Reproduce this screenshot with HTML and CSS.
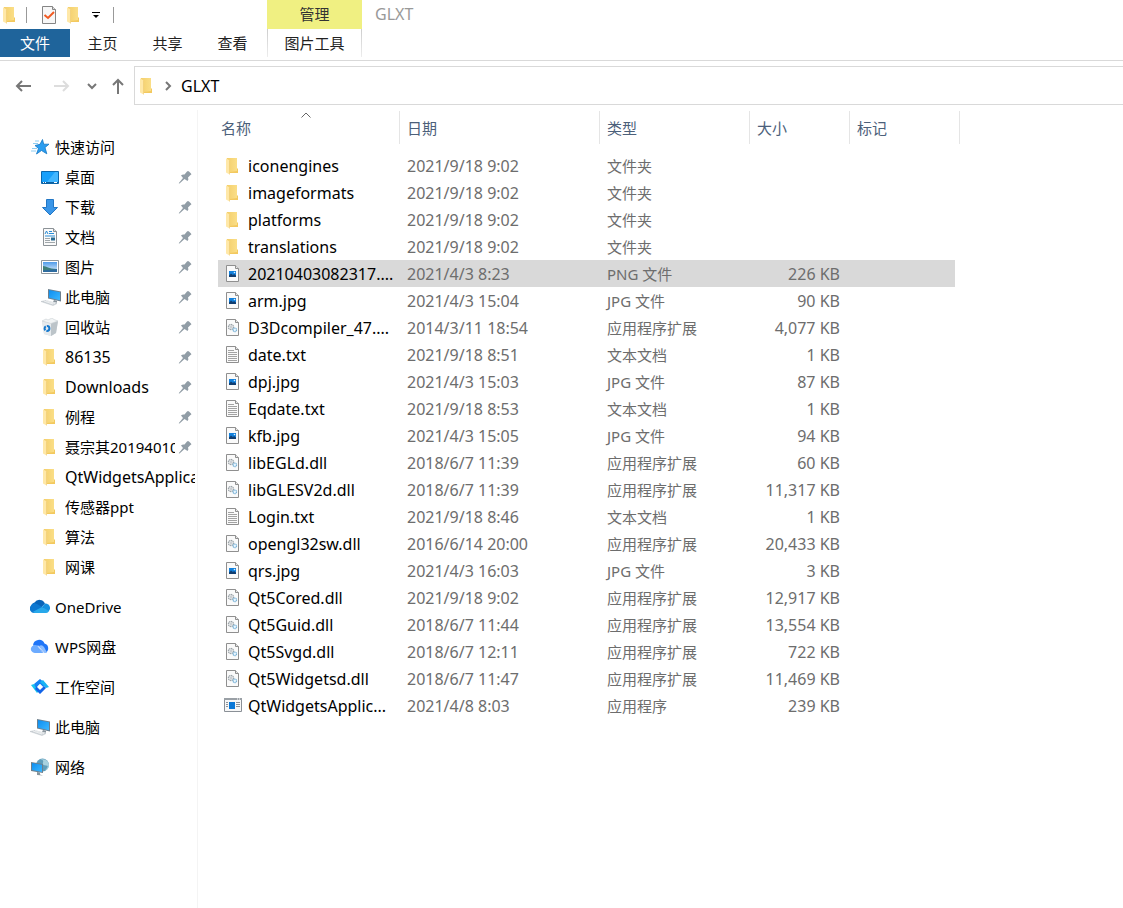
FILE: index.html
```html
<!DOCTYPE html>
<html lang="zh-CN">
  <head>
    <meta charset="UTF-8" />
    <meta name="viewport" content="width=device-width, initial-scale=1.0" />
    <title>GLXT</title>
    <link rel="stylesheet" href="styles.css">
  </head>
  <body>
    <!-- icons -->
    <svg class="sprite" aria-hidden="true">
      <defs>
        <linearGradient id="gold" x1="0" x2="1" y1="0" y2="0">
          <stop offset="0" stop-color="#f4cf6c" />
          <stop offset="1" stop-color="#fbe08a" />
        </linearGradient>
        <linearGradient id="screen" x1="0" x2="1" y1="0" y2="1">
          <stop offset="0" stop-color="#0d8ef0" />
          <stop offset="1" stop-color="#3db8ff" />
        </linearGradient>
        <linearGradient id="sky" x1="0" x2="0" y1="0" y2="1">
          <stop offset="0" stop-color="#4f9be8" />
          <stop offset="1" stop-color="#e8f4ff" />
        </linearGradient>
      </defs>
      <symbol id="i-folder" viewBox="0 0 18 18">
        <path d="M3 1h10v11h1v4H5L3 3z" fill="url(#gold)" />
        <path d="M13 11.5h1V16H6v-1l7-1z" fill="#f3c95f" />
        <path d="M2 1.300 5.600 3.600V17.600L2 15.500z" fill="#ffe8a8" />
        <path d="M5.200 3.400h.6v14h-.6z" fill="#eec970" />
      </symbol>
      <symbol id="i-image" viewBox="0 0 18 18">
        <path d="M2.500.5h9l3 3v13h-12z" fill="#fafafa" stroke="#8f8f8f" />
        <path d="M11.500.5v3h3" fill="#e8e8e8" stroke="#8f8f8f" />
        <path d="M5 6h7v6H5z" fill="#1280dc" />
        <path d="M5 10.500 7 8.500l2 1.500 1-1 2 1.500V12H5z" fill="#123e70" />
        <circle cx="10.500" cy="7.500" r=".8" fill="#d8efff" />
      </symbol>
      <symbol id="i-dll" viewBox="0 0 18 18">
        <path d="M2.500.5h9l3 3v13h-12z" fill="#fafafa" stroke="#8f8f8f" />
        <path d="M11.500.5v3h3" fill="#e8e8e8" stroke="#8f8f8f" />
        <circle cx="7" cy="8" r="2.500" fill="#f2f3f4" stroke="#9ba3a8" stroke-width="1.400" stroke-dasharray="1.400 .5" />
        <circle cx="7" cy="8" r=".8" fill="#9ba3a8" />
        <circle cx="10.800" cy="10.800" r="1.800" fill="#eaf6ff" stroke="#7cb4d8" stroke-width="1.200" stroke-dasharray="1.300 .4" />
      </symbol>
      <symbol id="i-text" viewBox="0 0 18 18">
        <path d="M2.500.5h9l3 3v13h-12z" fill="#fafafa" stroke="#8f8f8f" />
        <path d="M11.500.5v3h3" fill="#e8e8e8" stroke="#8f8f8f" />
        <path d="M4 4.500h6M4 6.500h9M4 8.500h9M4 10.500h9M4 12.500h9M4 14.500h9" stroke="#a3a3a3" />
      </symbol>
      <symbol id="i-exe" viewBox="0 0 18 18">
        <path d="M.5 1.500h17v13H.5z" fill="#f7f7f7" stroke="#8a9097" />
        <path d="M0 1h18v2H0z" fill="#9aa0a6" />
        <path d="M13 2h1m1 0h1" stroke="#fff" />
        <path d="M5 5h6v7H5z" fill="#0a78d7" />
        <path d="M2 5.500h2M2 7.500h2M2 9.500h2M12 5.500h4M12 7.500h4M12 9.500h4" stroke="#8e9399" />
      </symbol>
      <symbol id="i-task" viewBox="0 0 18 18">
        <path d="M2.500.5h10l3 3v14h-13z" fill="#f7f7f7" stroke="#858585" />
        <path d="M12.500.5v3h3" fill="#ddd" stroke="#858585" />
        <path d="m4.500 9 3.500 3 6-6" fill="none" stroke="#f15a22" stroke-width="2" />
      </symbol>
      <symbol id="i-star" viewBox="0 0 20 20">
        <path d="m12.500 2.500 1.200 4.700H19l-4 3.300 1.800 6.300-5.300-3.300-5 3.500 2-5.500L5 8.500l5-1.200z" fill="#2a9df0" stroke="#1477c4" stroke-width=".8" />
        <path d="M5 4h4M3 6.500h5M2 11.500h5M1 14h5" stroke="#8fcdf2" />
      </symbol>
      <symbol id="i-desktop" viewBox="0 0 18 18">
        <path d="M.5 3.500h17v12H.5z" fill="#18a0fb" stroke="#0b68ae" />
        <path d="m6 14 8-10h3v10z" fill="#42b6ff" />
        <path d="M1 14h16v1.500H1z" fill="#0b5f9f" />
        <path d="M2 14.500h1m1 0h1m8 0h3" stroke="#fff" />
      </symbol>
      <symbol id="i-down" viewBox="0 0 18 18">
        <path d="M5.500 1.500h7v8h4L9 17 1.500 9.500h4z" fill="#3a96e8" stroke="#2277c5" />
      </symbol>
      <symbol id="i-doc" viewBox="0 0 18 18">
        <path d="M2.500.5h10l3 3v14h-13z" fill="#fafafa" stroke="#8c9297" />
        <path d="M12.500.5v3h3" fill="#e0e0e0" stroke="#8c9297" />
        <path d="m4 6 1.500-3L7 6M8 3.500h3M8 5.500h5M4 8h10" fill="none" stroke="#2a8dd6" />
        <path d="M4 10.500h5M4 12.500h5M4 14.500h10" stroke="#a0a7ab" />
        <path d="M10 9.500h4v3h-4z" fill="#296a91" />
      </symbol>
      <symbol id="i-picture" viewBox="0 0 18 18">
        <path d="M.5 2.500h17v13H.5z" fill="#fff" stroke="#8f979d" />
        <path d="M2 4h14v10H2z" fill="url(#sky)" />
        <path d="M2 8c4 0 5 3 14 3v3H2z" fill="#3f7f78" />
        <path d="M2 12.500 16 11v3H2z" fill="#2d6ba0" />
      </symbol>
      <symbol id="i-pc" viewBox="0 0 20 20">
        <path d="m7 2 13 2.500v10L7 11.500z" fill="#6d7f8d" />
        <path d="m8 3 11 2.200v8L8 10.700z" fill="url(#screen)" />
        <path d="m13 13 3 .7v2l-4-1z" fill="#8b969e" />
        <path d="m0 14.500 5-1 11 3-4 2z" fill="#d0d6da" stroke="#b5bdc2" stroke-width=".5" />
        <path d="m3 14 9 3m-7-3.500 9 3" stroke="#fff" stroke-width=".6" />
      </symbol>
      <symbol id="i-bin" viewBox="0 0 18 18">
        <path d="m1 3 16 0-2 12-5 3-7-2z" fill="#d5dade" />
        <path d="m1 3 9 2v13l-7-2z" fill="#e6eaed" />
        <path d="m10 5 7-2-2 12-5 3z" fill="#bcc4c9" />
        <path d="m1 3 4-2 2 1 4-2 2 1.500L17 3l-7 2.500z" fill="#f1f4f5" stroke="#c9d0d4" stroke-width=".6" />
        <circle cx="6" cy="10.500" r="2.400" fill="none" stroke="#1478ce" stroke-width="2" stroke-dasharray="4 1" />
      </symbol>
      <symbol id="i-onedrive" viewBox="0 0 20 20">
        <path d="M5 15a5 5 0 0 1-.5-9.500A6 6 0 0 1 15 6.500L8 14z" fill="#0864b8" />
        <path d="M15 6.500a4.500 4.500 0 0 1 1 9H7z" fill="#1490df" />
        <path d="M1 8.500A4 4 0 0 1 7 7l7 4-9 5A4.500 4.500 0 0 1 1 8.500z" fill="#0d78d0" />
        <path d="m3 14.700 9-4.700 7 4a3.500 3.500 0 0 1-3 2H5q-1 0-2-1.300z" fill="#28a8ea" />
      </symbol>
      <symbol id="i-wps" viewBox="0 0 20 20">
        <path d="M3 8.500a6 6 0 0 1 11.500-2A5 5 0 0 1 15 16h-2L8 9z" fill="#1f75f8" />
        <path d="M5 16a4 4 0 1 1 2.500-7l5.500 7z" fill="#6cabff" />
        <path d="M9 9q3-2 5 1l3 5.500q-1 .5-3 .5z" fill="#8cbdff" />
        <path d="m8 8.500 6 7.500" stroke="#fff" stroke-width=".8" />
      </symbol>
      <symbol id="i-work" viewBox="0 0 20 20">
        <path d="m1 8 3-1 6 6-3 3z" fill="#18c3ef" />
        <path d="m4 7 6-5 6 5-3 3-3-3-4 4z" fill="#1583f5" />
        <path d="m19 10-3 1-6-6 3-2z" fill="#18b4f4" />
        <path d="m16 11-6 6-5-5 2-3 3 3 4-3z" fill="#1264e8" />
        <path d="m10 7 3 3-3 3-3-3z" fill="#fff" />
      </symbol>
      <symbol id="i-network" viewBox="0 0 20 20">
        <circle cx="12.500" cy="8" r="6.500" fill="#5e9dbb" />
        <path d="M10 2.500q4 0 3 3t3 3-1 5q4-1 4-6-1-6-9-5z" fill="#a8d1df" />
        <path d="m1 5 12 2v9L1 14z" fill="#6c7f8c" />
        <path d="m2 6 10 1.700V15L2 13z" fill="url(#screen)" />
        <path d="m7 15 3 .5v2l3 1-6-.5z" fill="#87949c" />
      </symbol>
      <symbol id="i-pin" viewBox="0 0 14 14">
        <path d="M9 1.500q1-1 2 0l2 2q1 1-.5 1.500L10 7.500q1 2-.5 3.500L6.500 9 1.500 13.500l-.8-.3L5 8 3 5.500q1.500-1.500 3.500-1z" fill="#919da6" />
      </symbol>
    </svg>

    <header class="titlebar">
      <div class="ribbon">
        <div class="quick">
          <svg class="icon"><use href="#i-folder" /></svg>
          <span class="sep"></span>
          <button class="plain" aria-label="属性"><svg class="icon"><use href="#i-task" /></svg></button>
          <button class="plain" aria-label="新建文件夹"><svg class="icon"><use href="#i-folder" /></svg></button>
          <button class="plain more" aria-label="自定义快速访问工具栏">
            <svg width="8" height="8" viewBox="0 0 8 8"><path d="M0 1.500h8" stroke="#000" /><path d="M1 4h6L4 7z" /></svg>
          </button>
          <span class="sep"></span>
        </div>
        <div class="tabs">
          <button class="tab file">文件</button>
          <button class="tab">主页</button>
          <button class="tab">共享</button>
          <button class="tab">查看</button>
        </div>
      </div>
      <div class="context">
        <div class="context-title">管理</div>
        <button class="tab context-tab">图片工具</button>
      </div>
      <div class="window-title latin">GLXT</div>
    </header>

    <nav class="navbar">
      <div class="nav-buttons">
        <button class="plain" aria-label="后退"><svg width="18" height="18" viewBox="0 0 18 18"><path d="M16 9H2m5-5L2 9l5 5" /></svg></button>
        <button class="plain off" aria-label="前进" disabled><svg width="18" height="18" viewBox="0 0 18 18"><path d="M1 9h14m-5-5 5 5-5 5" /></svg></button>
        <button class="plain recent" aria-label="最近"><svg width="10" height="10" viewBox="0 0 10 10"><path d="m1 3 4 4 4-4" /></svg></button>
        <button class="plain" aria-label="上移"><svg width="14" height="18" viewBox="0 0 14 18"><path d="M7 17V3M2 8l5-5 5 5" /></svg></button>
      </div>
      <div class="address">
        <svg class="icon"><use href="#i-folder" /></svg>
        <svg class="crumb" width="8" height="10" viewBox="0 0 8 10"><path d="m2 1 4 4-4 4" /></svg>
        <a class="latin" href="#">GLXT</a>
      </div>
    </nav>

    <main class="content">
      <aside class="sidebar">
        <a class="item top" href="#"><svg class="icon big"><use href="#i-star" /></svg><span>快速访问</span></a>
        <a class="item" href="#"><svg class="icon"><use href="#i-desktop" /></svg><span>桌面</span><svg class="pin"><use href="#i-pin" /></svg></a>
        <a class="item" href="#"><svg class="icon"><use href="#i-down" /></svg><span>下载</span><svg class="pin"><use href="#i-pin" /></svg></a>
        <a class="item" href="#"><svg class="icon"><use href="#i-doc" /></svg><span>文档</span><svg class="pin"><use href="#i-pin" /></svg></a>
        <a class="item" href="#"><svg class="icon"><use href="#i-picture" /></svg><span>图片</span><svg class="pin"><use href="#i-pin" /></svg></a>
        <a class="item" href="#"><svg class="icon big"><use href="#i-pc" /></svg><span>此电脑</span><svg class="pin"><use href="#i-pin" /></svg></a>
        <a class="item" href="#"><svg class="icon"><use href="#i-bin" /></svg><span>回收站</span><svg class="pin"><use href="#i-pin" /></svg></a>
        <a class="item" href="#"><svg class="icon"><use href="#i-folder" /></svg><span class="latin">86135</span><svg class="pin"><use href="#i-pin" /></svg></a>
        <a class="item" href="#"><svg class="icon"><use href="#i-folder" /></svg><span class="latin">Downloads</span><svg class="pin"><use href="#i-pin" /></svg></a>
        <a class="item" href="#"><svg class="icon"><use href="#i-folder" /></svg><span>例程</span><svg class="pin"><use href="#i-pin" /></svg></a>
        <a class="item" href="#"><svg class="icon"><use href="#i-folder" /></svg><span>聂宗其20194010</span><svg class="pin"><use href="#i-pin" /></svg></a>
        <a class="item" href="#"><svg class="icon"><use href="#i-folder" /></svg><span class="latin">QtWidgetsApplica</span></a>
        <a class="item" href="#"><svg class="icon"><use href="#i-folder" /></svg><span>传感器ppt</span></a>
        <a class="item" href="#"><svg class="icon"><use href="#i-folder" /></svg><span>算法</span></a>
        <a class="item" href="#"><svg class="icon"><use href="#i-folder" /></svg><span>网课</span></a>
        <a class="item top" href="#"><svg class="icon big"><use href="#i-onedrive" /></svg><span>OneDrive</span></a>
        <a class="item top" href="#"><svg class="icon big"><use href="#i-wps" /></svg><span>WPS网盘</span></a>
        <a class="item top" href="#"><svg class="icon big"><use href="#i-work" /></svg><span>工作空间</span></a>
        <a class="item top" href="#"><svg class="icon big"><use href="#i-pc" /></svg><span>此电脑</span></a>
        <a class="item top" href="#"><svg class="icon big"><use href="#i-network" /></svg><span>网络</span></a>
      </aside>

      <section class="files">
        <table>
          <colgroup>
            <col class="c-name"><col class="c-date"><col class="c-type"><col class="c-size"><col class="c-tag">
          </colgroup>
          <thead>
            <tr>
              <th>名称<svg class="sort" width="10" height="6" viewBox="0 0 10 6"><path d="m.5 5.500 4.500-4.500 4.500 4.500" /></svg></th>
              <th>日期</th>
              <th>类型</th>
              <th>大小</th>
              <th>标记</th>
            </tr>
          </thead>
          <tbody>
            <tr><td><svg class="icon"><use href="#i-folder" /></svg>iconengines</td><td>2021/9/18 9:02</td><td>文件夹</td><td></td><td></td></tr>
            <tr><td><svg class="icon"><use href="#i-folder" /></svg>imageformats</td><td>2021/9/18 9:02</td><td>文件夹</td><td></td><td></td></tr>
            <tr><td><svg class="icon"><use href="#i-folder" /></svg>platforms</td><td>2021/9/18 9:02</td><td>文件夹</td><td></td><td></td></tr>
            <tr><td><svg class="icon"><use href="#i-folder" /></svg>translations</td><td>2021/9/18 9:02</td><td>文件夹</td><td></td><td></td></tr>
            <tr class="selected"><td><svg class="icon"><use href="#i-image" /></svg>20210403082317....</td><td>2021/4/3 8:23</td><td>PNG 文件</td><td>226 KB</td><td></td></tr>
            <tr><td><svg class="icon"><use href="#i-image" /></svg>arm.jpg</td><td>2021/4/3 15:04</td><td>JPG 文件</td><td>90 KB</td><td></td></tr>
            <tr><td><svg class="icon"><use href="#i-dll" /></svg>D3Dcompiler_47....</td><td>2014/3/11 18:54</td><td>应用程序扩展</td><td>4,077 KB</td><td></td></tr>
            <tr><td><svg class="icon"><use href="#i-text" /></svg>date.txt</td><td>2021/9/18 8:51</td><td>文本文档</td><td>1 KB</td><td></td></tr>
            <tr><td><svg class="icon"><use href="#i-image" /></svg>dpj.jpg</td><td>2021/4/3 15:03</td><td>JPG 文件</td><td>87 KB</td><td></td></tr>
            <tr><td><svg class="icon"><use href="#i-text" /></svg>Eqdate.txt</td><td>2021/9/18 8:53</td><td>文本文档</td><td>1 KB</td><td></td></tr>
            <tr><td><svg class="icon"><use href="#i-image" /></svg>kfb.jpg</td><td>2021/4/3 15:05</td><td>JPG 文件</td><td>94 KB</td><td></td></tr>
            <tr><td><svg class="icon"><use href="#i-dll" /></svg>libEGLd.dll</td><td>2018/6/7 11:39</td><td>应用程序扩展</td><td>60 KB</td><td></td></tr>
            <tr><td><svg class="icon"><use href="#i-dll" /></svg>libGLESV2d.dll</td><td>2018/6/7 11:39</td><td>应用程序扩展</td><td>11,317 KB</td><td></td></tr>
            <tr><td><svg class="icon"><use href="#i-text" /></svg>Login.txt</td><td>2021/9/18 8:46</td><td>文本文档</td><td>1 KB</td><td></td></tr>
            <tr><td><svg class="icon"><use href="#i-dll" /></svg>opengl32sw.dll</td><td>2016/6/14 20:00</td><td>应用程序扩展</td><td>20,433 KB</td><td></td></tr>
            <tr><td><svg class="icon"><use href="#i-image" /></svg>qrs.jpg</td><td>2021/4/3 16:03</td><td>JPG 文件</td><td>3 KB</td><td></td></tr>
            <tr><td><svg class="icon"><use href="#i-dll" /></svg>Qt5Cored.dll</td><td>2021/9/18 9:02</td><td>应用程序扩展</td><td>12,917 KB</td><td></td></tr>
            <tr><td><svg class="icon"><use href="#i-dll" /></svg>Qt5Guid.dll</td><td>2018/6/7 11:44</td><td>应用程序扩展</td><td>13,554 KB</td><td></td></tr>
            <tr><td><svg class="icon"><use href="#i-dll" /></svg>Qt5Svgd.dll</td><td>2018/6/7 12:11</td><td>应用程序扩展</td><td>722 KB</td><td></td></tr>
            <tr><td><svg class="icon"><use href="#i-dll" /></svg>Qt5Widgetsd.dll</td><td>2018/6/7 11:47</td><td>应用程序扩展</td><td>11,469 KB</td><td></td></tr>
            <tr><td><svg class="icon"><use href="#i-exe" /></svg>QtWidgetsApplic...</td><td>2021/4/8 8:03</td><td>应用程序</td><td>239 KB</td><td></td></tr>
          </tbody>
        </table>
      </section>
    </main>
  </body>
</html>
```

FILE: styles.css
```css
* {
  box-sizing: border-box;
}
body {
  margin: 0;
  min-height: 100vh;
  display: flex;
  flex-direction: column;
  background: #fff;
  color: #000;
  font: 15px/20px "Noto Sans", "Noto Sans CJK SC", sans-serif;
}
button {
  border: none;
  background: none;
  font: inherit;
  color: inherit;
  padding: 0;
}
a {
  color: inherit;
  text-decoration: none;
}
.sprite {
  position: absolute;
  width: 0;
  height: 0;
}
.icon {
  width: 18px;
  height: 18px;
  flex: none;
}
.icon.big {
  width: 20px;
  height: 20px;
}
.plain {
  display: flex;
}
.latin {
  font-size: 16px;
}

/* title bar and ribbon tabs */
.titlebar {
  display: flex;
  height: 61px;
  border-bottom: 1px solid #d9d9d9;
}
.quick {
  display: flex;
  align-items: center;
  height: 29px;
  padding-left: 1px;
  gap: 7px;
}
.quick .sep {
  width: 1px;
  height: 16px;
  background: #999;
}
.quick .sep:nth-child(2) {
  margin-right: 6px;
}
.quick .more {
  margin: 0 6px 0 2px;
}
.tabs {
  display: flex;
  padding-right: 2px;
}
.tab {
  width: 65px;
  height: 28px;
  color: #222;
}
.tab.file {
  width: 70px;
  background: #1f649b;
  color: #fff;
}
.context {
  width: 95px;
  text-align: center;
}
.context-title {
  height: 29px;
  line-height: 28px;
  background: #f0f082;
  color: #333;
}
.context-tab {
  width: 100%;
  border: solid;
  border-width: 0 1px;
  border-image: linear-gradient(#ccc, #eee) 1;
}
.window-title {
  padding: 4px 13px;
  color: #999;
}

/* navigation */
.navbar {
  display: flex;
  padding-top: 5px;
}
.nav-buttons {
  display: flex;
  align-items: center;
  width: 134px;
  padding-left: 15px;
  gap: 16px;
}
.nav-buttons svg,
.crumb {
  fill: none;
  stroke: #777;
  stroke-width: 2;
}
.nav-buttons .off svg {
  stroke: #ddd;
}
.nav-buttons .off {
  margin-left: 4px;
}
.nav-buttons .recent {
  margin-right: -2px;
}
.address {
  flex: 1;
  display: flex;
  align-items: center;
  height: 39px;
  padding-left: 3px;
  border: 1px solid #d9d9d9;
  border-right: none;
}
.crumb {
  margin: 0 9px 0 8px;
}

/* body */
.content {
  flex: 1;
  display: flex;
}
.sidebar {
  width: 198px;
  margin-top: 5px;
  padding: 22px 2px 0 0;
  border-right: 1px solid #f4f4f4;
  flex: none;
}
.item {
  display: flex;
  align-items: center;
  height: 30px;
  padding-left: 41px;
  gap: 6px;
}
.item .big {
  margin-right: -2px;
}
.item.top {
  padding-left: 30px;
  gap: 7px;
}
.item.top:not(:first-child) {
  margin-top: 10px;
}
.item span {
  flex: 1;
  overflow: hidden;
  white-space: nowrap;
}
.pin {
  width: 14px;
  height: 14px;
  margin: 0 3px 0 -3px;
  flex: none;
}

.files {
  padding: 6px 0 0 20px;
}
table {
  width: 742px;
  table-layout: fixed;
  border-spacing: 0;
}
.c-name {
  width: 182px;
}
.c-date {
  width: 200px;
}
.c-type {
  width: 150px;
}
.c-size {
  width: 100px;
}
.c-tag {
  width: 110px;
}
th {
  position: relative;
  height: 33px;
  padding: 0 7px;
  border-right: 1px solid #e5e5e5;
  font-weight: normal;
  text-align: left;
  color: #4c607a;
}
th:first-child {
  padding-left: 3px;
}
.sort {
  position: absolute;
  left: 83px;
  top: 1px;
  fill: none;
  stroke: #666;
}
tbody::before {
  content: "";
  display: block;
  height: 8px;
}
td {
  height: 27px;
  padding: 0 7px;
  white-space: nowrap;
  color: #6d6d6d;
}
td:first-child {
  padding: 0 0 0 6px;
  font-size: 16px;
  color: #000;
}
td .icon {
  margin-right: 6px;
  vertical-align: -3px;
}
td:nth-child(2),
td:nth-child(4) {
  font-size: 16px;
}
td:nth-child(4) {
  padding-right: 10px;
  text-align: right;
}
td:last-child {
  border-right: 5px solid transparent;
  background-clip: padding-box;
}
.selected td {
  background-color: #d9d9d9;
}
```
